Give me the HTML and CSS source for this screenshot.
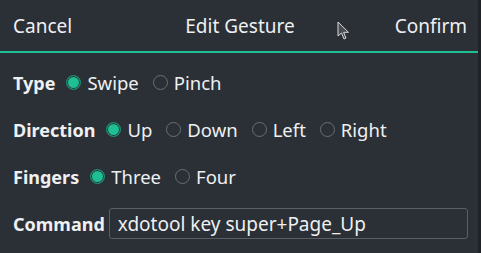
FILE: index.html
```html
<!DOCTYPE html>
<html lang="en">
  <head>
    <meta charset="utf-8" />
    <title>Edit Gesture</title>
    <link rel="stylesheet" href="styles.css">
  </head>
  <body>
    <div class="dialog">
      <div class="header">
        <button class="link-btn cancel">Cancel</button>
        <div class="title">Edit Gesture</div>
        <button class="link-btn confirm">Confirm</button>
      </div>

      <div class="form">
        <div class="row">
          <span class="label">Type</span>
          <label class="radio"><span class="dot checked"></span>Swipe</label>
          <label class="radio"><span class="dot"></span>Pinch</label>
        </div>
        <div class="row">
          <span class="label">Direction</span>
          <label class="radio"><span class="dot checked"></span>Up</label>
          <label class="radio"><span class="dot"></span>Down</label>
          <label class="radio"><span class="dot"></span>Left</label>
          <label class="radio"><span class="dot"></span>Right</label>
        </div>
        <div class="row">
          <span class="label">Fingers</span>
          <label class="radio"><span class="dot checked"></span>Three</label>
          <label class="radio"><span class="dot"></span>Four</label>
        </div>
        <div class="row">
          <span class="label">Command</span>
          <input class="command" type="text" value="xdotool key super+Page_Up">
        </div>
      </div>

      <!-- mouse pointer from the screenshot -->
      <svg class="cursor" width="14" height="20" viewBox="0 0 14 20">
        <path d="M1 1 L1 15 L4.5 12 L7 18 L9 17 L6.6 11.3 L11.5 11.3 Z" fill="#4a4d52" stroke="#d8d8d8" stroke-width="1"/>
      </svg>
    </div>
  </body>
</html>
```

FILE: styles.css
```css
body {
  margin: 0;
  background-color: #1f2227;
  font-family: "Noto Sans", "Liberation Sans", sans-serif;
  -webkit-font-smoothing: antialiased;
}

.dialog {
  position: relative;
  width: 478px;
  height: 253px;
  background-color: #2b2f36;
  color: #eef0f2;
}

.header {
  display: grid;
  grid-template-columns: 1fr auto 1fr;
  align-items: center;
  height: 53px;
  padding: 0 11px 0 13px;
  box-sizing: border-box;
  border-bottom: 2px solid #1fbf95;
}

.title {
  font-size: 19px;
}

.link-btn {
  background: none;
  border: none;
  padding: 0;
  color: #eef0f2;
  font-family: inherit;
  font-size: 19px;
  cursor: pointer;
}

.cancel {
  justify-self: start;
}

.confirm {
  justify-self: end;
}

.form {
  padding: 6px 10px 0 13px;
}

.row {
  display: flex;
  align-items: center;
  height: 47px;
}

.label {
  font-weight: bold;
  font-size: 18px;
  margin-right: 11px;
}

.radio {
  display: flex;
  align-items: center;
  font-size: 18.5px;
  margin-right: 14px;
}

.dot {
  width: 15px;
  height: 15px;
  border: 1px solid #6b6f75;
  border-radius: 50%;
  box-sizing: border-box;
  margin-right: 6px;
}

.dot.checked {
  background-color: #1fbf95;
  border-color: #1a8a6d;
  box-shadow: inset 0 0 0 1px #2b2f36;
}

.command {
  flex: 1;
  height: 31px;
  box-sizing: border-box;
  margin-left: -7px;
  padding: 0 8px;
  background: transparent;
  border: 1px solid #5a5e64;
  border-radius: 3px;
  color: #eef0f2;
  font-family: inherit;
  font-size: 19px;
}

.cursor {
  position: absolute;
  left: 337px;
  top: 21px;
}
```
